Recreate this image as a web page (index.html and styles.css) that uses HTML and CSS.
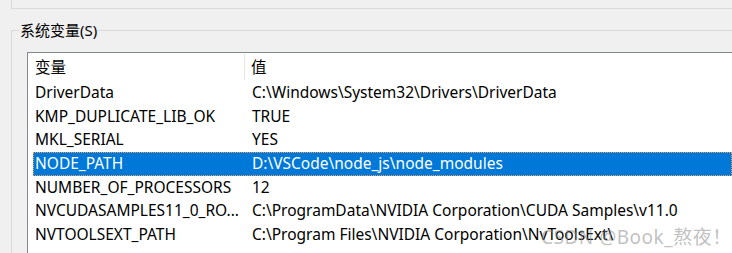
FILE: index.html
```html
<!DOCTYPE html>
<html lang="zh-CN">
<head>
  <meta charset="UTF-8">
  <title>系统变量</title>
  <link rel="stylesheet" href="styles.css">
</head>
<body>

<div class="top-panel"></div>

<fieldset class="group">
  <legend>系统变量(S)</legend>
  <div class="list">
    <div class="list-head">
      <div class="head-cell first">变量</div>
      <div class="head-cell">值</div>
    </div>
    <div class="rows">
      <div class="row"><span class="name">DriverData</span><span class="value">C:\Windows\System32\Drivers\DriverData</span></div>
      <div class="row"><span class="name">KMP_DUPLICATE_LIB_OK</span><span class="value">TRUE</span></div>
      <div class="row"><span class="name">MKL_SERIAL</span><span class="value">YES</span></div>
      <div class="row selected"><span class="name">NODE_PATH</span><span class="value">D:\VSCode\node_js\node_modules</span></div>
      <div class="row"><span class="name">NUMBER_OF_PROCESSORS</span><span class="value">12</span></div>
      <div class="row"><span class="name">NVCUDASAMPLES11_0_RO...</span><span class="value">C:\ProgramData\NVIDIA Corporation\CUDA Samples\v11.0</span></div>
      <div class="row"><span class="name">NVTOOLSEXT_PATH</span><span class="value">C:\Program Files\NVIDIA Corporation\NvToolsExt\</span></div>
    </div>
  </div>
</fieldset>

<div class="watermark">CSDN @Book_熬夜！</div>

</body>
</html>
```

FILE: styles.css
```css
html, body {
  margin: 0;
  height: 253px;
  overflow: hidden;
}
body {
  font-family: "Noto Sans", "Noto Sans CJK SC", sans-serif;
  font-size: 15.5px;
  background-color: #f0f0f0;
  color: #000;
  position: relative;
}
.top-panel {
  height: 8px;
  margin-left: 11px;
  border-left: 1px solid #dadada;
  border-bottom: 1px solid #dadada;
}
.group {
  margin: 11px 0 0 11px;
  padding: 0 0 0 15px;
  border: 1px solid #dadada;
  border-right: none;
  border-bottom: none;
  min-width: 0;
}
.group legend {
  margin-left: -8px;
  padding: 0 1px;
  font-size: 15px;
  line-height: 20px;
}
.list {
  margin-top: 12px;
  background-color: #fff;
  border-top: 1px solid #828790;
  border-left: 1px solid #828790;
  height: 200px;
  overflow: hidden;
}
.list-head {
  display: grid;
  grid-template-columns: 217px 1fr;
  height: 28px;
}
.head-cell {
  padding-left: 6px;
  line-height: 28px;
}
.head-cell.first {
  padding-left: 7px;
  box-shadow: inset -1px 0 0 #e5e5e5;
  height: 26px;
  margin-top: 1px;
  line-height: 26px;
}
.rows {
  padding-left: 5px;
}
.row {
  display: grid;
  grid-template-columns: 212px 1fr;
  height: 23.7px;
  line-height: 23.7px;
  white-space: nowrap;
}
.row .name {
  padding-left: 2px;
}
.row .value {
  padding-left: 7px;
}
.row.selected {
  background-color: #0078d7;
  color: #fff;
  outline: 1px dotted #e8a05c;
  outline-offset: -1px;
}
.watermark {
  position: absolute;
  left: 541px;
  top: 222px;
  font-size: 19px;
  letter-spacing: 0.5px;
  color: rgba(140, 140, 140, 0.55);
  white-space: nowrap;
}
```
